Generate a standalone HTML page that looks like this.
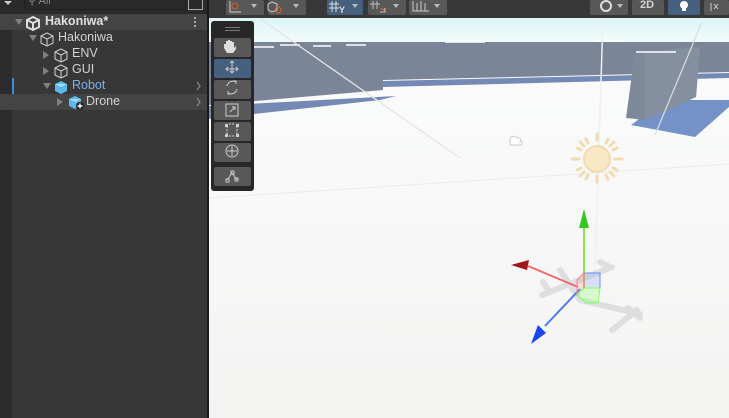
<!DOCTYPE html><html><head><style>
*{margin:0;padding:0;box-sizing:border-box}
body{width:729px;height:418px;overflow:hidden;background:#f5f6f5;font-family:"Liberation Sans",sans-serif;position:relative}
.a{position:absolute}
.t{color:#d2d2d2;font-size:12.5px;position:absolute}
.btn{position:absolute;background:#585858;border-radius:2px}
.tb{position:absolute;left:214px;width:37px;height:19px;background:#585858;border-radius:2px}
</style></head><body>
<!-- scene -->
<svg class="a" style="left:0;top:0" width="729" height="418">
<defs><linearGradient id="sk" x1="0" y1="0" x2="0" y2="1"><stop offset="0" stop-color="#dcf5f8"/><stop offset="1" stop-color="#f4fbfb"/></linearGradient>
<linearGradient id="gr" x1="0" y1="0" x2="0" y2="1"><stop offset="0" stop-color="#fbfcfc"/><stop offset="1" stop-color="#f3f3f2"/></linearGradient></defs>
<rect x="209" y="18" width="520" height="400" fill="url(#gr)"/>
<rect x="209" y="18" width="520" height="26" fill="url(#sk)"/>
<path d="M209 42H729V72L383 80V90L209 105Z" fill="#7a8597"/>
<path d="M209 106L396 96L380 100L209 119Z" fill="#7489b3"/>
<path d="M383 81L729 73V78L383 87Z" fill="#7489b3"/>
<path d="M631 125L665 100H729V107L695 137Z" fill="#7592c8"/>
<path d="M635 52L688 47H700L696 97L645 120L626 118Z" fill="#7d8899"/>
<path d="M645 52L700 47L696 97L645 120Z" fill="#848fa0"/>
<g stroke="#fff" stroke-width="1.5"><path d="M254 47h20M280 45h20M313 46h18M346 45h20M445 42h40M595 41h30M636 52h40M215 48h12"/></g>
<path d="M259 18L460 158" stroke="#e4e4e4" stroke-width="1.3"/>
<path d="M603 18L595 270" stroke="#f0f0f0" stroke-width="1.5"/>
<path d="M702 22L655 135" stroke="#dedede" stroke-width="1.2"/>
<path d="M209 198L729 164" stroke="#ebebeb"/>
<path d="M510 140c0-4 6-5 7-2 3-1 5 2 3 4h2v3h-12z" fill="#fff" stroke="#ccc"/>
<g stroke="#f1dcb0" stroke-width="3" stroke-linecap="round"><path d="M597 140v-6M597 176v6M579 159h-7M615 159h7M584 146l-4-4M610 172l4 4M610 146l4-4M584 172l-4 4M588 143l-2-4M606 175l2 4M606 143l2-4M588 175l-2 4M581 150l-4-2M613 168l4 2M613 150l4-2M581 168l-4 2"/></g>
<circle cx="597" cy="159" r="13" fill="#f9e7c6" stroke="#f1dcb0" stroke-width="2"/>
<g fill="none" stroke="#dcdedf" stroke-width="6" stroke-linejoin="round" stroke-linecap="round"><path d="M542 295l70 -28M560 270l20 30 60 14M612 330l25 -20M640 318l-12 -10M548 290l-5-8M600 262l8 4"/></g>
<path d="M584 288V228" stroke="#8ce14f" stroke-width="2"/><path d="M579 228l5-19 5 19z" fill="#34c71f"/>
<path d="M578 287L528 266" stroke="#f06868" stroke-width="2"/><path d="M511 265l18-5 -2 10z" fill="#a01818"/>
<path d="M580 289L545 326" stroke="#4a78f0" stroke-width="2"/><path d="M531 344l7-19 8 8z" fill="#1747ea"/>
<rect x="584" y="273" width="16" height="15" fill="rgba(150,170,255,.3)" stroke="#6a8aff"/>
<path d="M577 280l7-7v15l-7 7z" fill="rgba(255,120,120,.2)" stroke="#ff8080"/>
<path d="M577 295l9 8h12l2-15h-16z" fill="rgba(150,255,120,.3)" stroke="#80ff60"/>
</svg>
<!-- hierarchy -->
<div class="a" style="left:0;top:0;width:207px;height:418px;background:#373737"></div>
<div class="a" style="left:0;top:14px;width:12px;height:404px;background:#2c2c2c"></div>
<div class="a" style="left:0;top:0;width:207px;height:14px;background:#2a2a2a"></div>
<div class="a" style="left:24px;top:0;width:162px;height:10px;background:#2a2a2a;border:1px solid #1e1e1e;border-top:none;border-radius:0 0 4px 4px"></div>
<div class="t" style="left:28px;top:-6px;color:#888;font-size:11px">⚲ All</div>
<div class="a" style="left:188px;top:0;width:15px;height:10px;border:1px solid #aaa;border-top:none"></div>
<div class="a" style="left:4px;top:1px;width:0;height:0;border-left:4px solid transparent;border-right:4px solid transparent;border-top:4px solid #ccc"></div>
<div class="a" style="left:0;top:14px;width:207px;height:16px;background:#444"></div>
<div class="a" style="left:0;top:94px;width:207px;height:16px;background:#444"></div>
<div class="a" style="left:12px;top:78px;width:2px;height:16px;background:#3a8de0"></div>
<svg class="a" style="left:0;top:0" width="207" height="120">
<g fill="#808080">
<path d="M15 19h8l-4 6z"/><path d="M29 35h8l-4 6z"/><path d="M43 51v8l6-4z"/><path d="M43 67v8l6-4z"/><path d="M43 83h8l-4 6z"/><path d="M57 98v8l6-4z"/>
</g>
<g fill="none" stroke="#ddd" stroke-width="1.3"><path d="M33 17l6 3v7l-6 3-6-3v-7z M27 20l6 3 6-3 M33 23v7" stroke-width="2"/></g>
<g fill="none" stroke="#c8c8c8" stroke-width="1.1">
<path d="M47 33l6 3v7l-6 3-6-3v-7z M41 36l6 3 6-3 M47 39v7"/>
<path d="M61 49l6 3v7l-6 3-6-3v-7z M55 52l6 3 6-3 M61 55v7"/>
<path d="M61 65l6 3v7l-6 3-6-3v-7z M55 68l6 3 6-3 M61 71v7"/>
</g>
<path d="M61 81l6 3v7l-6 3-6-3v-7z" fill="#5cb8ec"/><path d="M55 84l6 3 6-3z" fill="#9fdcff"/>
<path d="M75 96l6 3v7l-6 3-6-3v-7z" fill="#5cb8ec"/><path d="M69 99l6 3 6-3z" fill="#9fdcff"/>
<circle cx="80" cy="106" r="4" fill="#222"/><path d="M80 103.5v5M77.5 106h5" stroke="#fff" stroke-width="1.4"/>
<g fill="#ccc"><circle cx="195" cy="18" r="1"/><circle cx="195" cy="22" r="1"/><circle cx="195" cy="26" r="1"/></g>
<path d="M197 82l3 4-3 4M197 98l3 4-3 4" stroke="#888" fill="none" stroke-width="1.2"/>
</svg>
<div class="t" style="left:45px;top:14px;font-weight:bold;color:#e0e0e0">Hakoniwa*</div>
<div class="t" style="left:58px;top:30px">Hakoniwa</div>
<div class="t" style="left:72px;top:46px">ENV</div>
<div class="t" style="left:72px;top:62px">GUI</div>
<div class="t" style="left:72px;top:78px;color:#7bb2f0">Robot</div>
<div class="t" style="left:86px;top:94px">Drone</div>
<div class="a" style="left:207px;top:0;width:2px;height:418px;background:#1a1a1a"></div>
<!-- toolbar -->
<div class="a" style="left:209px;top:0;width:520px;height:18px;background:#383838"></div>
<div class="btn" style="left:226px;top:0;width:38px;height:15px"></div>
<div class="btn" style="left:268px;top:0;width:38px;height:15px"></div>
<div class="btn" style="left:327px;top:0;width:36px;height:15px;background:#46607f"></div>
<div class="btn" style="left:368px;top:0;width:38px;height:15px"></div>
<div class="btn" style="left:409px;top:0;width:38px;height:15px"></div>
<div class="btn" style="left:590px;top:0;width:38px;height:15px"></div>
<div class="btn" style="left:632px;top:0;width:32px;height:15px"></div>
<div class="btn" style="left:668px;top:0;width:32px;height:15px;background:#46607f"></div>
<div class="btn" style="left:704px;top:0;width:25px;height:15px"></div>
<div class="t" style="left:640px;top:-1px;font-size:11px;font-weight:bold">2D</div>
<svg class="a" style="left:209px;top:0" width="520" height="18">
<g fill="#bbb"><path d="M42 4h6l-3 4zM84 4h6l-3 4zM143 4h6l-3 4zM184 4h6l-3 4zM225 4h6l-3 4zM408 4h6l-3 4z"/></g>
<path d="M21 1v11h11" stroke="#ccc" fill="none"/><circle cx="26" cy="6" r="3" fill="none" stroke="#e55d2d"/>
<path d="M63 2l5 2v6l-5 2-4-2v-6z" fill="none" stroke="#ccc"/><circle cx="69" cy="10" r="3" fill="none" stroke="#e55d2d"/>
<path d="M123 1v11M127 1v11M120 4h10M120 8h10" stroke="#ddd"/><text x="130" y="13" font-size="9" fill="#ddd" font-weight="bold" font-family="Liberation Sans">Y</text>
<path d="M164 1v8M168 1v8M161 4h10M176 8v4h-5" stroke="#bbb" fill="none"/><path d="M171 9h4v3" stroke="#e55d2d" fill="none"/>
<path d="M204 1v10h16M208 3v8M212 1v10M216 3v8" stroke="#ccc" fill="none"/>
<circle cx="397" cy="6" r="5" fill="none" stroke="#ddd" stroke-width="2"/>
<circle cx="475" cy="5" r="4" fill="#fff"/><rect x="473" y="8" width="4" height="3" fill="#fff"/>
<path d="M502 3v8M505 4l4 5M509 4l-4 5" stroke="#ccc"/>
</svg>
<!-- tools palette -->
<div class="a" style="left:211px;top:21px;width:43px;height:170px;background:#272727;border-radius:3px"></div>
<div class="a" style="left:225px;top:27px;width:15px;height:1px;background:#777"></div>
<div class="a" style="left:225px;top:30px;width:15px;height:1px;background:#777"></div>
<div class="tb" style="top:38px"></div>
<div class="tb" style="top:59px;background:#46607f"></div>
<div class="tb" style="top:80px"></div>
<div class="tb" style="top:101px"></div>
<div class="tb" style="top:122px"></div>
<div class="tb" style="top:143px"></div>
<div class="tb" style="top:167px"></div>
<svg class="a" style="left:214px;top:38px" width="37" height="150">
<path d="M13 15l-3-5v-4h2v-3h2v-1h2v1h2v1h2v6l2-2v3l-3 4z" fill="#ddd"/>
<g stroke="#ccc" fill="none"><path d="M18 24v10M13 31h10"/><path d="M16 25l2-2 2 2M16 33l2 2 2-2M14 29l-2 2 2 2M22 29l2 2-2 2"/>
<path d="M13 48a6 6 0 0 1 9-4M23 51a6 6 0 0 1-9 4M20 43h2v3M16 56h-2v-3"/>
<rect x="12" y="66" width="12" height="12"/><path d="M16 74l5-5M18 69h3v3"/>
<path d="M13 88v8M23 88v8M15 86h6M15 98h6" stroke-dasharray="2 1"/>
<circle cx="18" cy="113" r="6"/><path d="M18 108v10M13 113h10"/>
<path d="M13 142l5-7 5 7"/><rect x="12" y="141" width="3" height="3"/><rect x="21" y="140" width="3" height="3"/><rect x="17" y="133" width="3" height="3"/></g>
<g fill="#ccc"><rect x="11" y="86" width="3" height="3"/><rect x="22" y="86" width="3" height="3"/><rect x="11" y="96" width="3" height="3"/><rect x="22" y="96" width="3" height="3"/></g>
</svg>
</body></html>
